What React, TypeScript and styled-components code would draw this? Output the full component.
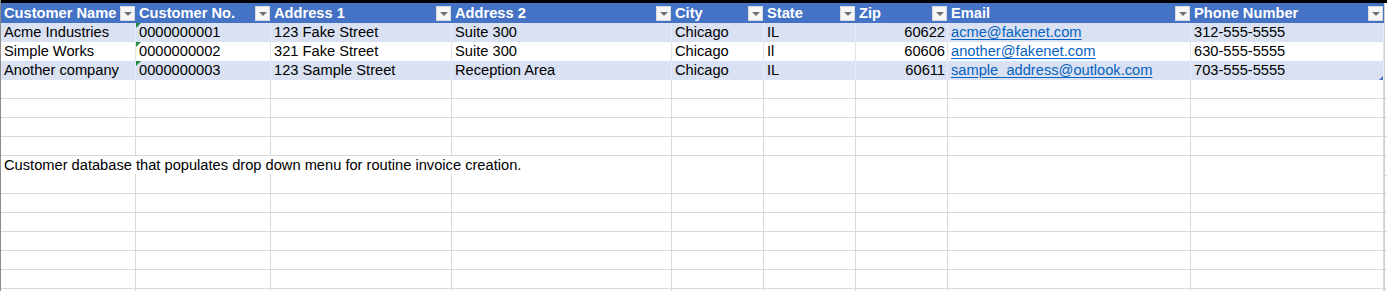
import styled, { createGlobalStyle, css } from 'styled-components';

const GlobalStyle = createGlobalStyle`
  html, body {
    margin: 0;
    padding: 0;
    background: #fff;
    overflow: hidden;
  }
  body {
    font-family: 'Liberation Sans', Arial, sans-serif;
    font-size: 14.67px;
    color: #000;
  }
`;

type Variant = 'band' | 'plain' | 'grid';

const COLUMNS = '135px 135px 181px 220px 92px 92px 92px 243px 193px 1fr';

const palette = {
  band: { bg: '#d9e1f2', bottom: '#8ea9db', side: '#e8edf7' },
  plain: { bg: '#ffffff', bottom: '#8ea9db', side: '#e3e3e3' },
  grid: { bg: '#ffffff', bottom: '#d9d9d9', side: '#d9d9d9' },
};

const Sheet = styled.div`
  width: 1387px;
  height: 291px;
  overflow: hidden;
  box-sizing: border-box;
  border-left: 1px solid #8c8c8c;
  display: flex;
  flex-direction: column;
`;

const TopStrip = styled.div`
  height: 3px;
  background: #000;
  flex-shrink: 0;
`;

const Row = styled.div`
  display: grid;
  grid-template-columns: ${COLUMNS};
  height: 19px;
  flex-shrink: 0;
`;

const HeaderRow = styled(Row)`
  height: 20px;
`;

const HeaderCell = styled.div`
  background: #4472c4;
  color: #fff;
  font-weight: bold;
  display: flex;
  align-items: center;
  justify-content: space-between;
  padding: 0 1px 0 3px;
  line-height: 20px;
  white-space: nowrap;
  overflow: hidden;
`;

const FilterButton = styled.span`
  width: 15px;
  height: 15px;
  box-sizing: border-box;
  background: #f6f6f6;
  border: 1px solid #dadada;
  display: flex;
  align-items: center;
  justify-content: center;
  flex-shrink: 0;
  &::after {
    content: '';
    border-left: 4px solid transparent;
    border-right: 4px solid transparent;
    border-top: 4px solid #707070;
    margin-top: 1px;
  }
`;

const Cell = styled.div<{ $variant: Variant; $align?: 'left' | 'right' }>`
  position: relative;
  box-sizing: border-box;
  background: ${(p) => palette[p.$variant].bg};
  border-bottom: 1px solid ${(p) => palette[p.$variant].bottom};
  border-right: 1px solid ${(p) => palette[p.$variant].side};
  padding: 0 2px 0 3px;
  line-height: 19px;
  text-align: ${(p) => p.$align ?? 'left'};
  white-space: nowrap;
  overflow: visible;
`;

const Filler = styled.div<{ $grid?: boolean }>`
  border-left: 1px solid #d0d0d0;
  ${(p) =>
    p.$grid &&
    css`
      border-bottom: 1px solid #d9d9d9;
    `}
`;

const Link = styled.span`
  color: #0563c1;
  text-decoration: underline;
  text-underline-offset: 2px;
`;

const TextFlag = styled.span`
  position: absolute;
  top: 0;
  left: 0;
  width: 0;
  height: 0;
  border-top: 5px solid #1e8a3c;
  border-right: 5px solid transparent;
`;

const ResizeHandle = styled.span`
  position: absolute;
  right: 0;
  bottom: 0;
  width: 0;
  height: 0;
  border-bottom: 4px solid #4472c4;
  border-left: 4px solid transparent;
`;

/* overflowing text hides the gridlines of the cells it spills into */
const Note = styled.span`
  position: relative;
  z-index: 1;
  display: inline-block;
  height: 18px;
  line-height: 19px;
  padding-right: 4px;
  background: #fff;
`;

const headers = [
  'Customer Name',
  'Customer No.',
  'Address 1',
  'Address 2',
  'City',
  'State',
  'Zip',
  'Email',
  'Phone Number',
];

const customers = [
  ['Acme Industries', '0000000001', '123 Fake Street', 'Suite 300', 'Chicago', 'IL', '60622', 'acme@fakenet.com', '312-555-5555'],
  ['Simple Works', '0000000002', '321 Fake Street', 'Suite 300', 'Chicago', 'Il', '60606', 'another@fakenet.com', '630-555-5555'],
  ['Another company', '0000000003', '123 Sample Street', 'Reception Area', 'Chicago', 'IL', '60611', 'sample_address@outlook.com', '703-555-5555'],
];

const EMPTY_ROWS = 12;
const NOTE_ROW = 4;

const App = () => {
  return (
    <>
      <GlobalStyle />
      <Sheet>
        <TopStrip />
        <HeaderRow>
          {headers.map((h) => (
            <HeaderCell key={h}>
              {h}
              <FilterButton />
            </HeaderCell>
          ))}
          <Filler />
        </HeaderRow>

        {customers.map((c, i) => {
          const variant: Variant = i % 2 === 0 ? 'band' : 'plain';
          const last = i === customers.length - 1;
          return (
            <Row key={c[1]}>
              {c.map((value, j) => (
                <Cell key={j} $variant={variant} $align={j === 6 ? 'right' : 'left'}>
                  {j === 1 && <TextFlag />}
                  {j === 7 ? <Link>{value}</Link> : value}
                  {j === 8 && last && <ResizeHandle />}
                </Cell>
              ))}
              <Filler />
            </Row>
          );
        })}

        {Array.from({ length: EMPTY_ROWS }).map((_, i) => (
          <Row key={`empty-${i}`}>
            {headers.map((h, j) => (
              <Cell key={h} $variant='grid'>
                {i === NOTE_ROW && j === 0 && (
                  <Note>Customer database that populates drop down menu for routine invoice creation.</Note>
                )}
              </Cell>
            ))}
            <Filler $grid />
          </Row>
        ))}
      </Sheet>
    </>
  );
};

export default App;
